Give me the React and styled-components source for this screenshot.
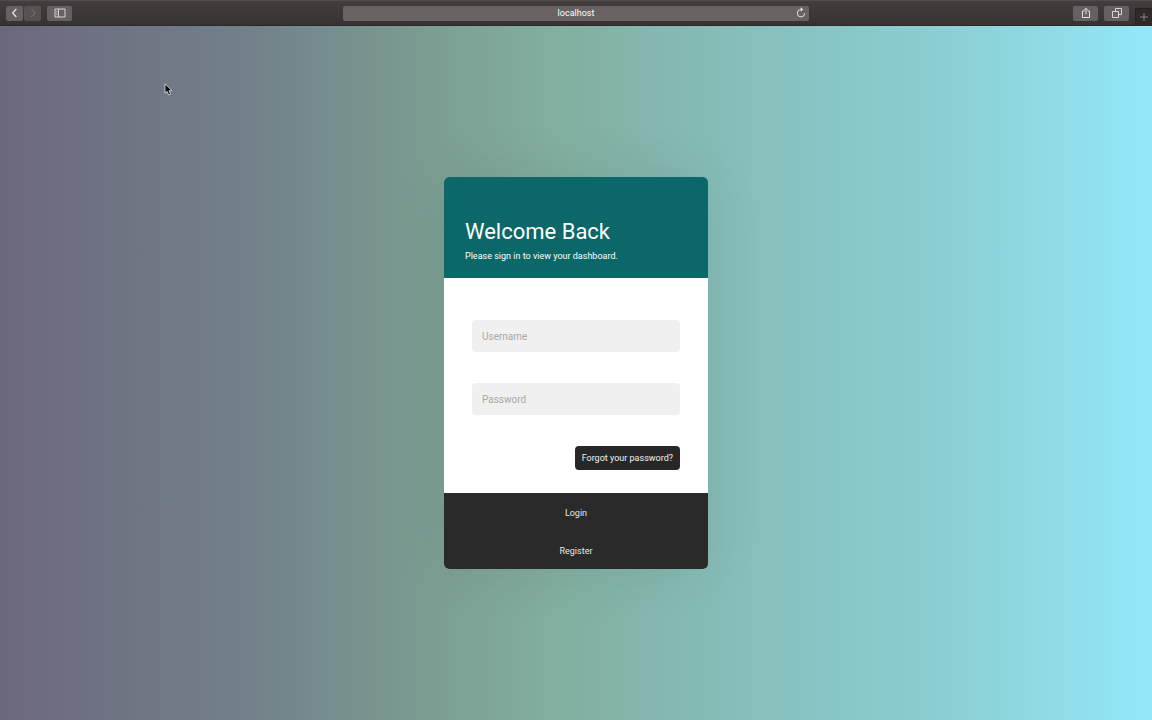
import React from 'react'
import styled, { createGlobalStyle } from 'styled-components'

const GlobalStyle = createGlobalStyle`
  * {
    box-sizing: border-box;
  }

  body {
    margin: 0;
    font-family: Roboto, "Liberation Sans", sans-serif;
  }

  button, input {
    font-family: inherit;
  }
`

const Page = styled.div`
  position: relative;
  display: flex;
  flex-direction: column;
  min-height: 100vh;
`

const Toolbar = styled.header`
  display: grid;
  grid-template-columns: 1fr minmax(0, 466px) 1fr;
  align-items: center;
  height: 26px;
  border-top: 1px solid #524c4d;
  border-bottom: 1px solid #2b2828;
  background: linear-gradient(#433d3d, #373232);
`

const ToolGroup = styled.div`
  display: flex;
  align-items: center;
  align-self: stretch;
  justify-content: ${props => props.$end ? 'flex-end' : 'flex-start'};
  gap: 6px;
  padding-left: 6px;
`

const ButtonPair = styled.div`
  display: flex;
  gap: 1px;
`

const ToolButton = styled.button`
  display: flex;
  align-items: center;
  justify-content: center;
  width: ${props => props.$narrow ? '17px' : '25px'};
  height: 15px;
  padding: 0;
  border: none;
  border-radius: 2px;
  background: ${props => props.disabled ? '#575152' : '#656061'};
  color: ${props => props.disabled ? '#7d7778' : '#e4e2e2'};
`

const NewTab = styled.button`
  display: flex;
  align-items: center;
  justify-content: center;
  align-self: flex-end;
  width: 17px;
  height: 17px;
  padding: 0;
  border: none;
  border-left: 1px solid #252222;
  border-top: 1px solid #252222;
  background: #2e2a2a;
  color: #928e8e;
`

const AddressBar = styled.form`
  display: flex;
  height: 15px;
  padding-left: 17px;
  border-radius: 2px;
  background: #686262;
`

const Address = styled.input`
  flex: 1;
  min-width: 0;
  padding: 0;
  border: none;
  outline: none;
  background: transparent;
  color: #fff;
  font-size: 9px;
  line-height: 15px;
  text-align: center;
`

const Reload = styled.button`
  display: flex;
  align-items: center;
  justify-content: center;
  width: 17px;
  padding: 0;
  border: none;
  background: transparent;
  color: #e4e2e2;
`

const Main = styled.main`
  flex: 1;
  display: flex;
  align-items: center;
  justify-content: center;
  background: linear-gradient(
    to right,
    #6c687c 0%,
    #72818a 22%,
    #7a9b91 36%,
    #82af9f 48%,
    #85bbb5 61%,
    #8bd0d4 83%,
    #93e8f9 100%
  );
`

const Card = styled.form`
  width: 264px;
  border-radius: 5px;
  overflow: hidden;
  background: #fff;
  box-shadow: 0 0 60px rgba(0, 0, 0, 0.08);
`

const CardHeader = styled.div`
  padding: 41px 21px 15px;
  background: #0b6768;
  color: #fff;
`

const Title = styled.h1`
  margin: 0;
  font-size: 22px;
  font-weight: 400;
  line-height: 28px;
`

const Subtitle = styled.p`
  margin: 3px 0 0;
  font-size: 9px;
  line-height: 14px;
`

const CardBody = styled.div`
  display: flex;
  flex-direction: column;
  gap: 31px;
  padding: 42px 28px 23px;
`

const Field = styled.input`
  width: 100%;
  height: 32px;
  padding: 0 10px;
  border: none;
  border-radius: 4px;
  outline: none;
  background: #f0f0f0;
  color: #2a2a2a;
  font-size: 10px;

  &::placeholder {
    color: #a9a9a9;
    opacity: 1;
  }
`

const ForgotButton = styled.button`
  align-self: flex-end;
  height: 24px;
  padding: 0 7px;
  border: none;
  border-radius: 4px;
  background: #272727;
  color: #f2f2f2;
  font-size: 9px;
`

const CardFooter = styled.div`
  display: flex;
  flex-direction: column;
  background: #2a2a2a;
`

const FooterButton = styled.button`
  height: 38px;
  padding: 2px 0 0;
  border: none;
  background: transparent;
  color: #e8e8e8;
  font-size: 9px;
`

const Pointer = styled.svg`
  position: absolute;
  left: 164px;
  top: 83px;
`

const Icon = ({ size = 12, children }) => (
  <svg
    width={size}
    height={size}
    viewBox="0 0 12 12"
    fill="none"
    stroke="currentColor"
    aria-hidden="true"
  >
    {children}
  </svg>
)

const BrowserToolbar = () => {
  return (
    <Toolbar>
      <ToolGroup>
        <ButtonPair>
          <ToolButton $narrow aria-label="Back">
            <Icon><path d="M7.300 2 3.700 6l3.600 4" strokeWidth="1.300" /></Icon>
          </ToolButton>
          <ToolButton $narrow disabled aria-label="Forward">
            <Icon><path d="M4.500 2 8 6l-3.500 4" /></Icon>
          </ToolButton>
        </ButtonPair>
        <ToolButton aria-label="Sidebar">
          <Icon>
            <path d="M1 2h10v8H1zM4.500 2V10" strokeWidth=".9" />
            <path d="M2 4.300h1.500M2 6h1.500M2 7.700h1.500" strokeWidth=".6" />
          </Icon>
        </ToolButton>
      </ToolGroup>
      <AddressBar onSubmit={e => e.preventDefault()}>
        <Address aria-label="Address" defaultValue="localhost" />
        <Reload type="button" aria-label="Reload">
          <Icon>
            <path d="M6 2.500a3.700 3.700 0 1 0 3.700 3.700" />
            <path d="M5.700.3 8.200 2.500 5.700 4.700z" fill="currentColor" stroke="none" />
          </Icon>
        </Reload>
      </AddressBar>
      <ToolGroup $end>
        <ToolButton aria-label="Share">
          <Icon>
            <path d="M4.500 4H2.500v6.500h7V4h-2M6 7.500V1.500M4 3.300l2-2 2 2" />
          </Icon>
        </ToolButton>
        <ToolButton aria-label="Tabs">
          <Icon>
            <path d="M1.500 4.500h6V10.500h-6zM4.500 4.500v-3h6v6h-3" strokeWidth=".9" />
          </Icon>
        </ToolButton>
        <NewTab aria-label="New tab">
          <Icon><path d="M6 2v8M2 6h8" strokeWidth=".9" /></Icon>
        </NewTab>
      </ToolGroup>
    </Toolbar>
  )
}

const LoginCard = () => {
  return (
    <Card onSubmit={e => e.preventDefault()}>
      <CardHeader>
        <Title>Welcome Back</Title>
        <Subtitle>Please sign in to view your dashboard.</Subtitle>
      </CardHeader>
      <CardBody>
        <Field type="text" placeholder="Username" aria-label="Username" />
        <Field type="password" placeholder="Password" aria-label="Password" />
        <ForgotButton type="button">Forgot your password?</ForgotButton>
      </CardBody>
      <CardFooter>
        <FooterButton type="submit">Login</FooterButton>
        <FooterButton type="button">Register</FooterButton>
      </CardFooter>
    </Card>
  )
}

const App = () => {
  return (
    <>
      <GlobalStyle />
      <Page>
        <BrowserToolbar />
        <Main>
          <LoginCard />
        </Main>
        <Pointer width="9" height="13" viewBox="0 0 9 13" aria-hidden="true">
          <path
            d="M1 .8v9.400l2.100-1.900 1.500 3.700 1.900-.8-1.500-3.500h3z"
            fill="#0a0a0a"
            stroke="#e6e8ea"
            strokeWidth=".8"
          />
        </Pointer>
      </Page>
    </>
  )
}

export default App
